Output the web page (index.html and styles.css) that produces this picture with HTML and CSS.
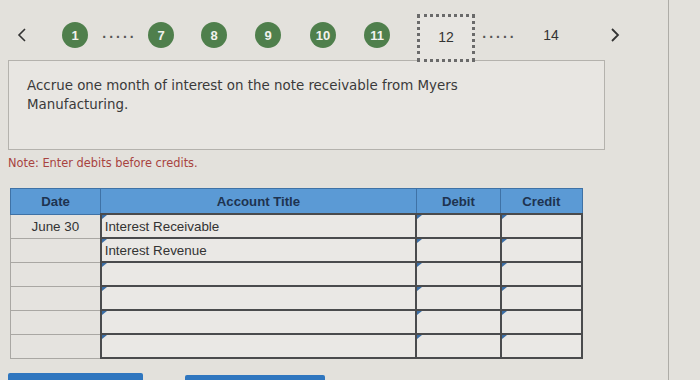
FILE: index.html
```html
<!DOCTYPE html>
<html lang="en">
<head>
  <meta charset="UTF-8">
  <title>Journal Entry - Question 12</title>
  <link rel="stylesheet" href="styles.css">
</head>
<body>

<div class="page">

  <!-- Question navigation -->
  <nav class="steps">
    <span class="arrow">
      <svg width="12" height="16" viewBox="0 0 12 16"><polyline points="9,2 3,8 9,14" fill="none" stroke="#333" stroke-width="1.6"/></svg>
    </span>
    <span class="step done">1</span>
    <span class="more">.....</span>
    <span class="step done">7</span>
    <span class="step done">8</span>
    <span class="step done">9</span>
    <span class="step done">10</span>
    <span class="step done">11</span>
    <span class="step current">12</span>
    <span class="more">.....</span>
    <span class="step plain">14</span>
    <span class="arrow">
      <svg width="12" height="16" viewBox="0 0 12 16"><polyline points="3,2 9,8 3,14" fill="none" stroke="#333" stroke-width="1.8"/></svg>
    </span>
  </nav>

  <div class="question">
    <p>Accrue one month of interest on the note receivable from Myers Manufacturing.</p>
  </div>

  <p class="note">Note: Enter debits before credits.</p>

  <table class="journal">
    <thead>
      <tr>
        <th class="col-date">Date</th>
        <th class="col-title">Account Title</th>
        <th class="col-amt">Debit</th>
        <th class="col-amt2">Credit</th>
      </tr>
    </thead>
    <tbody>
      <tr>
        <td class="date">June 30</td>
        <td class="entry">Interest Receivable</td>
        <td class="entry"></td>
        <td class="entry"></td>
      </tr>
      <tr>
        <td class="date"></td>
        <td class="entry">Interest Revenue</td>
        <td class="entry"></td>
        <td class="entry"></td>
      </tr>
      <tr>
        <td class="date"></td>
        <td class="entry"></td>
        <td class="entry"></td>
        <td class="entry"></td>
      </tr>
      <tr>
        <td class="date"></td>
        <td class="entry"></td>
        <td class="entry"></td>
        <td class="entry"></td>
      </tr>
      <tr>
        <td class="date"></td>
        <td class="entry"></td>
        <td class="entry"></td>
        <td class="entry"></td>
      </tr>
      <tr>
        <td class="date"></td>
        <td class="entry"></td>
        <td class="entry"></td>
        <td class="entry"></td>
      </tr>
    </tbody>
  </table>

  <div class="actions">
    <button class="btn first"></button>
    <button class="btn second"></button>
  </div>

</div>

</body>
</html>
```

FILE: styles.css
```css
/* General */
body {
  margin: 0;
  padding: 0;
  background: #e3e1dc;
  color: #333;
  font-family: 'Liberation Sans', Arial, sans-serif;
}

.page {
  width: 668px;
  height: 380px;
  border-right: 1px solid #aeaca7;
  overflow: hidden;
}

/* Step navigation */
.steps {
  display: grid;
  grid-template-columns: 44px 62px 24px 62px 44px 64px 46px 62px 76px 28px 78px 50px;
  justify-items: center;
  align-items: center;
  height: 50px;
  padding-top: 10px;
  position: relative;
  z-index: 2;
}

.arrow {
  display: flex;
  align-items: center;
}

.step {
  width: 26px;
  height: 26px;
  border-radius: 50%;
  display: flex;
  align-items: center;
  justify-content: center;
  font-size: 13px;
  font-weight: bold;
}

.step.done {
  background: #4f7f4c;
  color: #f2f2ee;
}

.step.current {
  width: 52px;
  height: 40px;
  padding-bottom: 2px;
  border-radius: 0;
  border: 3px dotted #6a6a6a;
  background: #e7e5e1;
  color: #333;
  font-weight: normal;
  font-size: 14px;
  align-self: end;
  margin-bottom: -2px;
}

.step.plain {
  color: #333;
  font-weight: normal;
  font-size: 14px;
}

.more {
  font-size: 14px;
  font-weight: bold;
  letter-spacing: 3px;
  margin-right: -3px;
  color: #555;
  margin-top: -4px;
}

/* Question text */
.question {
  margin-left: 8px;
  width: 595px;
  height: 88px;
  border: 1px solid #b4b2ad;
  background: #e8e6e2;
}

.question p {
  margin: 0;
  padding: 15px 0 0 18px;
  max-width: 480px;
  font-family: 'DejaVu Sans', Verdana, sans-serif;
  font-size: 13.4px;
  line-height: 19px;
  color: #3a3a3a;
}

.note {
  margin: 6px 0 0 8px;
  font-family: 'DejaVu Sans', Verdana, sans-serif;
  font-size: 11.4px;
  line-height: 14px;
  color: #a8433f;
}

/* Journal table */
.journal {
  margin: 18px 0 0 10px;
  width: 573px;
  border-collapse: collapse;
  font-size: 13.4px;
}

.journal th {
  height: 24px;
  padding: 0;
  background: #5b9ad5;
  border: 1px solid #3f72a6;
  color: #1e3350;
  font-size: 13.2px;
  font-weight: bold;
}

.col-date { width: 90px; }
.col-title { width: 318px; }
.col-amt { width: 84px; }
.col-amt2 { width: 81px; }

.journal td {
  height: 22px;
  padding: 0;
}

.journal .date {
  text-align: center;
  background: #e5e3df;
  border: 1px solid #a9a7a3;
  color: #333;
}

.journal .entry {
  position: relative;
  padding-left: 3px;
  background: #eae8e5;
  border: 2px solid #4a4b4d;
  color: #333;
}

/* little blue marker in each input cell */
.journal .entry::before {
  content: '';
  position: absolute;
  top: 0;
  left: 0;
  border-top: 4px solid #3b6ea6;
  border-right: 5px solid transparent;
}

/* Buttons under the table */
.actions {
  display: flex;
  gap: 42px;
  margin: 14px 0 0 8px;
}

.btn {
  width: 135px;
  height: 30px;
  border: none;
  border-radius: 2px;
  background: #2f76bf;
}

.btn.second {
  width: 140px;
  margin-top: 2px;
}
```
